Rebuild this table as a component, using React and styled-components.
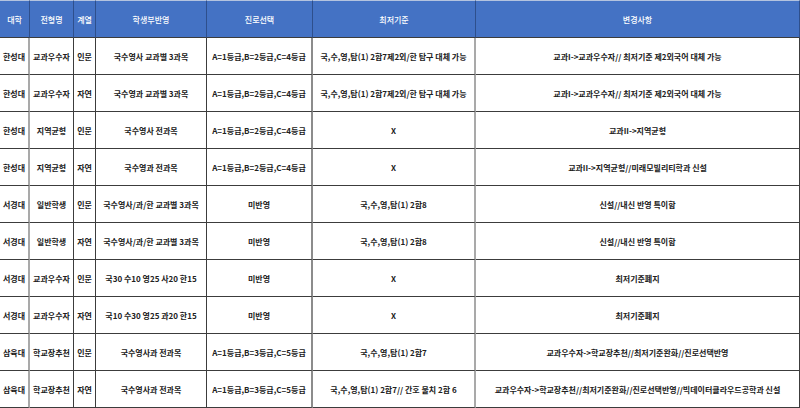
import React from "react";
import styled, { createGlobalStyle } from "styled-components";

// -----------------------------------------
// 대입 전형 변경사항 표
// -----------------------------------------

const GlobalStyle = createGlobalStyle`
  html, body {
    margin: 0;
    padding: 0;
    background: #ffffff;
  }
  body {
    font-family: "Noto Sans CJK KR", "Noto Sans", sans-serif;
  }
`;

const columns = [
  { title: "대학", width: 30, line: "soft" },
  { title: "전형명", width: 44, line: "hard" },
  { title: "계열", width: 22, line: "hard" },
  { title: "학생부반영", width: 111, line: "hard" },
  { title: "진로선택", width: 106, line: "mid" },
  { title: "최저기준", width: 163, line: "soft" },
  { title: "변경사항", width: 324, line: "hard" },
];

const rows = [
  ["한성대", "교과우수자", "인문", "국수영사 교과별 3과목", "A=1등급,B=2등급,C=4등급", "국,수,영,탐(1) 2합7제2외/한 탐구 대체 가능", "교과I->교과우수자// 최저기준 제2외국어 대체 가능"],
  ["한성대", "교과우수자", "자연", "국수영과 교과별 3과목", "A=1등급,B=2등급,C=4등급", "국,수,영,탐(1) 2합7제2외/한 탐구 대체 가능", "교과I->교과우수자// 최저기준 제2외국어 대체 가능"],
  ["한성대", "지역균형", "인문", "국수영사 전과목", "A=1등급,B=2등급,C=4등급", "X", "교과II->지역균형"],
  ["한성대", "지역균형", "자연", "국수영과 전과목", "A=1등급,B=2등급,C=4등급", "X", "교과II->지역균형//미래모빌리티학과 신설"],
  ["서경대", "일반학생", "인문", "국수영사/과/한 교과별 3과목", "미반영", "국,수,영,탐(1) 2합8", "신설//내신 반영 특이함"],
  ["서경대", "일반학생", "자연", "국수영사/과/한 교과별 3과목", "미반영", "국,수,영,탐(1) 2합8", "신설//내신 반영 특이함"],
  ["서경대", "교과우수자", "인문", "국30 수10 영25 사20 한15", "미반영", "X", "최저기준폐지"],
  ["서경대", "교과우수자", "자연", "국10 수30 영25 과20 한15", "미반영", "X", "최저기준폐지"],
  ["삼육대", "학교장추천", "인문", "국수영사과 전과목", "A=1등급,B=3등급,C=5등급", "국,수,영,탐(1) 2합7", "교과우수자->학교장추천//최저기준완화//진로선택반영"],
  ["삼육대", "학교장추천", "자연", "국수영사과 전과목", "A=1등급,B=3등급,C=5등급", "국,수,영,탐(1) 2합7// 간호 물치 2합 6", "교과우수자->학교장추천//최저기준완화//진로선택반영//빅데이터클라우드공학과 신설"],
];

export default function App() {
  return (
    <>
      <GlobalStyle />
      <Sheet $cols={columns.map((c) => `${c.width}px`).join(" ")}>
        {columns.map((col) => (
          <HeadCell key={col.title}>{col.title}</HeadCell>
        ))}
        {rows.map((row, r) =>
          row.map((text, c) => (
            <Cell key={`${r}-${c}`} $line={columns[c].line}>
              {text}
            </Cell>
          ))
        )}
      </Sheet>
    </>
  );
}

//Styling the component

const lines = {
  soft: "2px solid #a9a9a9",
  mid: "2px solid #8c8c8c",
  hard: "1px solid #3c3c3c",
};

const Sheet = styled.div`
  display: grid;
  grid-template-columns: ${(p) => p.$cols};
  grid-template-rows: 38px;
  grid-auto-rows: 37px;
  width: 800px;
  overflow: hidden;
  background: #ffffff;
`;

const HeadCell = styled.div`
  box-sizing: border-box;
  display: flex;
  align-items: center;
  justify-content: center;
  background: #4472c4;
  color: #ffffff;
  font-size: 8px;
  font-weight: 500;
  white-space: nowrap;
  border-top: 1px solid #b4c3df;
  border-right: 1px solid #2e4f8c;
  border-bottom: 1px solid #3c3c3c;
`;

const Cell = styled.div`
  box-sizing: border-box;
  display: flex;
  align-items: center;
  justify-content: center;
  overflow: hidden;
  white-space: nowrap;
  color: #202020;
  font-size: 8px;
  font-weight: 700;
  border-right: ${(p) => lines[p.$line]};
  border-bottom: 1px solid #3c3c3c;
`;
